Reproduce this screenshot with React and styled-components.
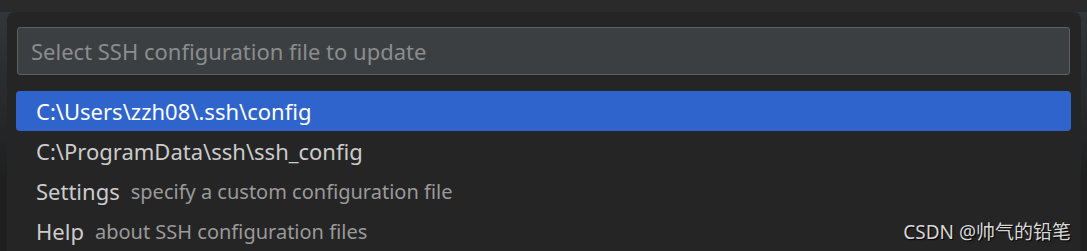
import React from 'react';
import styled, { createGlobalStyle } from 'styled-components';

const Global = createGlobalStyle`
  html, body {
    margin: 0;
    padding: 0;
    background: #2a2a2a;
    overflow: hidden;
  }
  #root {
    width: 1087px;
    height: 251px;
  }
`

const Screen = styled.div`
  position: relative;
  width: 1087px;
  height: 251px;
  background: #2a2a2a;
  display: flex;
  flex-direction: column;
  font-family: "Noto Sans", "Open Sans", sans-serif;
  overflow: hidden;
`

const Backdrop = styled.div`
  flex: 1;
  display: flex;
  margin-top: 12px;
  background: linear-gradient(#31363a, #1f1f1f 70%);
`

const Widget = styled.div`
  flex: 1;
  margin-left: 7px;
  margin-right: 6px;
  background: #252526;
  border-radius: 8px 8px 0 0;
  padding: 15px 10px 0 9px;
  display: flex;
  flex-direction: column;
`

const InputBox = styled.div`
  height: 48px;
  box-sizing: border-box;
  margin: 0 1px 0 1px;
  background: #3c3f41;
  border: 1px solid #5f5f5f;
  border-radius: 3px;
  display: flex;
  align-items: center;
  padding-left: 13px;
  font-size: 22px;
  color: #8a8d8f;
`

const List = styled.div`
  margin-top: 16px;
  display: flex;
  flex-direction: column;
`

const Row = styled.div`
  height: 40px;
  display: flex;
  align-items: center;
  padding-left: 20px;
  border-radius: 4px;
  background: ${p => (p.$selected ? '#2f64cd' : 'transparent')};
  color: ${p => (p.$selected ? '#ffffff' : '#cccccc')};
  font-size: 22px;
  white-space: nowrap;
`

const Desc = styled.span`
  margin-left: 11px;
  font-size: 20px;
  color: #9a9a9a;
`

const Watermark = styled.div`
  position: absolute;
  right: 16px;
  bottom: 6px;
  font-family: "Noto Sans", "Noto Sans CJK SC", sans-serif;
  font-size: 19px;
  color: #d8d8d8;
  text-shadow: 1px 1px 1px #000;
`

const items = [
  { label: 'C:\\Users\\zzh08\\.ssh\\config', selected: true },
  { label: 'C:\\ProgramData\\ssh\\ssh_config' },
  { label: 'Settings', desc: 'specify a custom configuration file' },
  { label: 'Help', desc: 'about SSH configuration files' },
];

export default function App() {
  return (
    <>
      <Global />
      <Screen>
        <Backdrop>
          <Widget>
            <InputBox>Select SSH configuration file to update</InputBox>
            <List>
              {items.map(item => (
                <Row key={item.label} $selected={item.selected}>
                  {item.label}
                  {item.desc && <Desc>{item.desc}</Desc>}
                </Row>
              ))}
            </List>
          </Widget>
        </Backdrop>
        <Watermark>CSDN @帅气的铅笔</Watermark>
      </Screen>
    </>
  );
}
